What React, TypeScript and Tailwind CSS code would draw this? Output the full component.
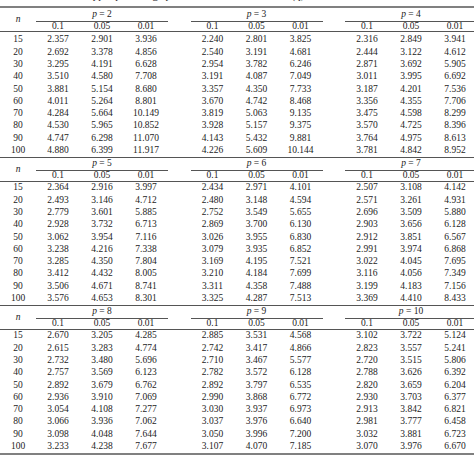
const ns = [15, 20, 30, 40, 50, 60, 70, 80, 90, 100];

type Group = { p: number; rows: string[][] };

const blocks: Group[][] = [
  [
    {
      p: 2,
      rows: [
        ['2.357', '2.901', '3.936'],
        ['2.692', '3.378', '4.856'],
        ['3.295', '4.191', '6.628'],
        ['3.510', '4.580', '7.708'],
        ['3.881', '5.154', '8.680'],
        ['4.011', '5.264', '8.801'],
        ['4.284', '5.664', '10.149'],
        ['4.530', '5.965', '10.852'],
        ['4.747', '6.298', '11.070'],
        ['4.880', '6.399', '11.917'],
      ],
    },
    {
      p: 3,
      rows: [
        ['2.240', '2.801', '3.825'],
        ['2.540', '3.191', '4.681'],
        ['2.954', '3.782', '6.246'],
        ['3.191', '4.087', '7.049'],
        ['3.357', '4.350', '7.733'],
        ['3.670', '4.742', '8.468'],
        ['3.819', '5.063', '9.135'],
        ['3.928', '5.157', '9.375'],
        ['4.143', '5.432', '9.881'],
        ['4.226', '5.609', '10.144'],
      ],
    },
    {
      p: 4,
      rows: [
        ['2.316', '2.849', '3.941'],
        ['2.444', '3.122', '4.612'],
        ['2.871', '3.692', '5.905'],
        ['3.011', '3.995', '6.692'],
        ['3.187', '4.201', '7.536'],
        ['3.356', '4.355', '7.706'],
        ['3.475', '4.598', '8.299'],
        ['3.570', '4.725', '8.396'],
        ['3.764', '4.975', '8.613'],
        ['3.781', '4.842', '8.952'],
      ],
    },
  ],
  [
    {
      p: 5,
      rows: [
        ['2.364', '2.916', '3.997'],
        ['2.493', '3.146', '4.712'],
        ['2.779', '3.601', '5.885'],
        ['2.928', '3.732', '6.713'],
        ['3.062', '3.954', '7.116'],
        ['3.238', '4.216', '7.338'],
        ['3.285', '4.350', '7.804'],
        ['3.412', '4.432', '8.005'],
        ['3.506', '4.671', '8.741'],
        ['3.576', '4.653', '8.301'],
      ],
    },
    {
      p: 6,
      rows: [
        ['2.434', '2.971', '4.101'],
        ['2.480', '3.148', '4.594'],
        ['2.752', '3.549', '5.655'],
        ['2.869', '3.700', '6.130'],
        ['3.026', '3.955', '6.830'],
        ['3.079', '3.935', '6.852'],
        ['3.169', '4.195', '7.521'],
        ['3.210', '4.184', '7.699'],
        ['3.311', '4.358', '7.488'],
        ['3.325', '4.287', '7.513'],
      ],
    },
    {
      p: 7,
      rows: [
        ['2.507', '3.108', '4.142'],
        ['2.571', '3.261', '4.931'],
        ['2.696', '3.509', '5.880'],
        ['2.903', '3.656', '6.128'],
        ['2.912', '3.851', '6.567'],
        ['2.991', '3.974', '6.868'],
        ['3.022', '4.045', '7.695'],
        ['3.116', '4.056', '7.349'],
        ['3.199', '4.183', '7.156'],
        ['3.369', '4.410', '8.433'],
      ],
    },
  ],
  [
    {
      p: 8,
      rows: [
        ['2.670', '3.205', '4.285'],
        ['2.615', '3.283', '4.774'],
        ['2.732', '3.480', '5.696'],
        ['2.757', '3.569', '6.123'],
        ['2.892', '3.679', '6.762'],
        ['2.936', '3.910', '7.069'],
        ['3.054', '4.108', '7.277'],
        ['3.066', '3.936', '7.062'],
        ['3.098', '4.048', '7.644'],
        ['3.233', '4.238', '7.677'],
      ],
    },
    {
      p: 9,
      rows: [
        ['2.885', '3.531', '4.568'],
        ['2.742', '3.417', '4.866'],
        ['2.710', '3.467', '5.577'],
        ['2.782', '3.572', '6.128'],
        ['2.892', '3.797', '6.535'],
        ['2.990', '3.868', '6.772'],
        ['3.030', '3.937', '6.973'],
        ['3.037', '3.976', '6.640'],
        ['3.050', '3.996', '7.200'],
        ['3.107', '4.070', '7.185'],
      ],
    },
    {
      p: 10,
      rows: [
        ['3.102', '3.722', '5.124'],
        ['2.823', '3.557', '5.241'],
        ['2.720', '3.515', '5.806'],
        ['2.788', '3.626', '6.392'],
        ['2.820', '3.659', '6.204'],
        ['2.930', '3.703', '6.377'],
        ['2.913', '3.842', '6.821'],
        ['2.981', '3.777', '6.458'],
        ['3.032', '3.881', '6.723'],
        ['3.070', '3.976', '6.670'],
      ],
    },
  ],
];

const alphas = ['0.1', '0.05', '0.01'];

function Block({ groups, first }: { groups: Group[]; first: boolean }) {
  return (
    <div>
      {/* rule above the block */}
      {first ? <div className="h-[2px] bg-[#808080]" /> : <div className="h-px bg-[#555]" />}

      {/* header */}
      <div className="flex">
        <div className="w-[36px] flex items-center justify-center italic">n</div>
        {groups.map((g, gi) => (
          <div key={g.p} className={`w-[132px] flex flex-col ${gi > 0 ? 'ml-[22.5px]' : ''}`}>
            <div
              className={`flex items-center justify-center border-b border-[#555] ${
                first ? 'h-[14px]' : 'h-[13px]'
              }`}
            >
              <span>
                <i>p</i> = {g.p}
              </span>
            </div>
            <div className={`flex ${first ? 'h-[9px]' : 'h-[10px]'}`}>
              {alphas.map((a) => (
                <div key={a} className="w-[44px] flex items-center justify-center">
                  {a}
                </div>
              ))}
            </div>
          </div>
        ))}
      </div>
      <div className="h-px bg-[#555]" />

      {/* body */}
      <div className={first ? 'pt-[2px]' : ''}>
        {ns.map((n, ri) => (
          <div key={n} className="flex h-[12.3px]">
            <div className="w-[36px] flex items-center justify-center">{n}</div>
            {groups.map((g, gi) => (
              <div key={g.p} className={`flex ${gi > 0 ? 'ml-[22.5px]' : ''}`}>
                {g.rows[ri].map((v, vi) => (
                  <div key={vi} className="w-[44px] flex items-center justify-center">
                    {v}
                  </div>
                ))}
              </div>
            ))}
          </div>
        ))}
      </div>
    </div>
  );
}

export default function App() {
  return (
    <div className="w-[474px] h-[457px] overflow-hidden bg-white text-[#1c1c1c] font-['Liberation_Serif',serif] text-[9.5px] leading-none">
      {/* caption, cut off at the top edge */}
      <div className="h-[6px] overflow-hidden pl-[40px]">
        <div className="mt-[-10px] text-[11px] leading-[11px] whitespace-nowrap">
          Simulated upper percentage points of the statistic for the (q)
        </div>
      </div>
      <div className="w-[477px]">
        {blocks.map((b, i) => (
          <Block key={i} groups={b} first={i === 0} />
        ))}
        <div className="h-[2px] bg-[#808080]" />
      </div>
    </div>
  );
}
